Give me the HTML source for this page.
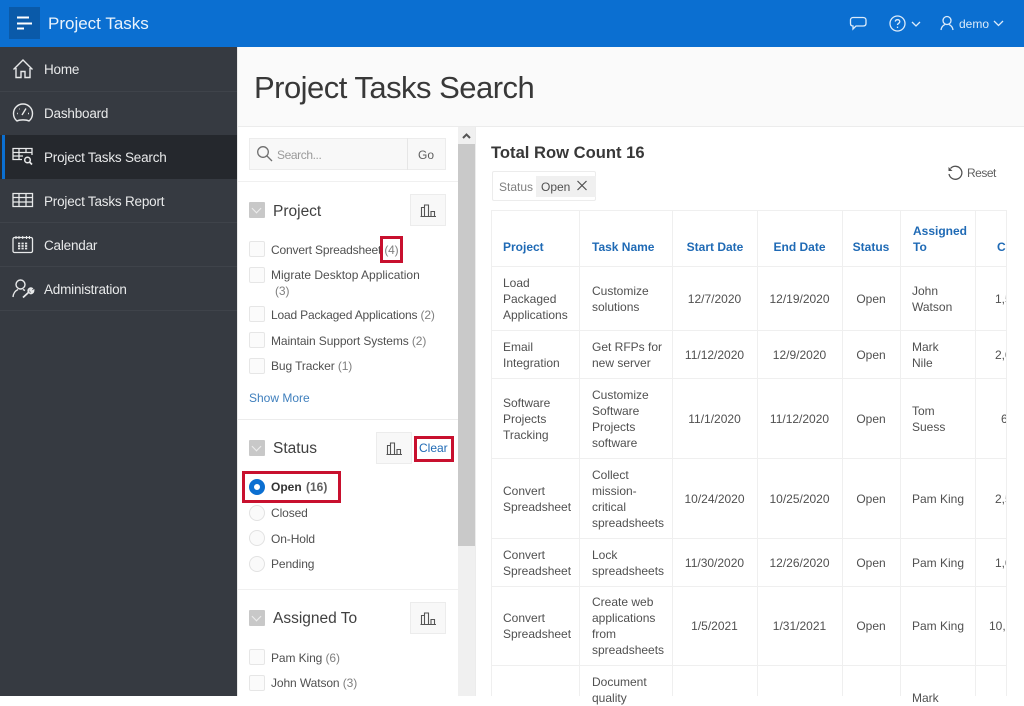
<!DOCTYPE html>
<html><head><meta charset="utf-8"><style>
*{box-sizing:border-box}
html,body{margin:0;padding:0;width:1024px;height:696px;overflow:hidden;background:#fff;font-family:"Liberation Sans",sans-serif;color:#404040}
.a{position:absolute;white-space:nowrap}
.nav{position:absolute;left:44px;font-size:13.500px;letter-spacing:-.2px;line-height:20px;color:#e8e9ea;white-space:nowrap}
.sep{position:absolute;left:0;width:237px;height:1px;background:#3f434a}
.ck{position:absolute;left:249px;width:16px;height:16px;border:1px solid #e6e6e6;border-radius:2px;background:#fbfbfb}
.rd{position:absolute;left:249px;width:16px;height:16px;border:1px solid #e2e2e2;border-radius:50%;background:#fafafa}
.o{position:absolute;left:271px;font-size:12px;letter-spacing:-.1px;line-height:16px;color:#505050;white-space:nowrap}
.o i{font-style:normal;color:#808080}
.h{position:absolute;font-size:15.500px;line-height:20px;color:#404040;left:273px;white-space:nowrap}
.fold{position:absolute;left:249px;width:16px;height:16px;background:#c8c8c8;border-radius:1px}
.fold:after{content:"";position:absolute;left:4px;top:3px;width:6px;height:6px;border-right:1.3px solid #eee;border-bottom:1.3px solid #eee;transform:rotate(45deg)}
.cb{position:absolute;width:36px;height:32px;background:#f8f8f8;border:1px solid #ececec}
.c{position:absolute;display:flex;align-items:center;font-size:12px;line-height:16px;color:#505050;padding:0 12px;white-space:nowrap}
.m{justify-content:center;text-align:center;padding:0 2px}
.t{position:absolute;display:flex;align-items:flex-end;font-size:12px;line-height:16px;font-weight:700;color:#1f6ab5;padding:0 12px 11px;white-space:nowrap}
.vl{position:absolute;top:210px;width:1px;height:486px;background:#efefef}
.hl{position:absolute;left:491px;width:515px;height:1px;background:#efefef}
.b{position:absolute;font-size:12px;line-height:16px;color:#505050;overflow:hidden;white-space:nowrap}
</style></head><body>

<div class="a" style="left:0;top:0;width:1024px;height:47px;background:#0b6fd1"></div>
<div class="a" style="left:9px;top:7px;width:31px;height:32px;background:#0a5aa9"></div>
<svg class="a" style="left:9px;top:7px" width="31" height="32" fill="none" stroke="#fff" stroke-width="2"><path d="M8 10.500H20M8 16.500H23M8 21.500H15"/></svg>
<div class="a" style="left:48px;top:13px;font-size:17px;line-height:22px;color:#eaf3fc">Project Tasks</div>
<svg class="a" style="left:848px;top:14px" width="20" height="20" fill="none" stroke="#dcebfa" stroke-width="1.300"><path d="M5 3.500H15C17 3.500 18 4.700 18 6V9.500C18 11 17 12 15 12H8L5 15V12C3 12 2.500 11 2.500 9.500V6C2.500 4.700 3.500 3.500 5 3.500Z"/></svg>
<svg class="a" style="left:888px;top:14px" width="36" height="20" fill="none" stroke="#dcebfa" stroke-width="1.300"><circle cx="9.500" cy="9.500" r="7.500"/><path d="M7.300 7.600C7.500 5 11.800 5.100 11.800 7.600C11.800 9.300 9.500 9.300 9.500 11"/><path d="M9.500 12.600V14"/><path d="M24 8L28 12L32 8"/></svg>
<svg class="a" style="left:939px;top:14px" width="16" height="20" fill="none" stroke="#dcebfa" stroke-width="1.300"><circle cx="8" cy="6.500" r="4"/><path d="M2 16C2.500 12 5 11 6 10.500M14 16C13.500 12 11 11 10 10.500"/></svg>
<div class="a" style="left:959px;top:16px;font-size:12px;line-height:16px;color:#dcebfa">demo</div>
<svg class="a" style="left:992px;top:18px" width="14" height="12" fill="none" stroke="#dcebfa" stroke-width="1.300"><path d="M2 3L6.500 7.500L11 3"/></svg>

<div class="a" style="left:0;top:47px;width:238px;height:649px;background:#363a41"></div>
<div class="a" style="left:237px;top:47px;width:1px;height:649px;background:#e8e8e8"></div>
<div class="a" style="left:0;top:135px;width:237px;height:44px;background:#25282d"></div>
<div class="a" style="left:2px;top:135px;width:3px;height:44px;background:#0b6fd1"></div>
<div class="sep" style="top:91px"></div><div class="sep" style="top:222px"></div><div class="sep" style="top:266px"></div><div class="sep" style="top:310px"></div>

<svg class="a" style="left:12px;top:58px" width="22" height="22" fill="none" stroke="#e8e9ea" stroke-width="1.400"><path d="M1.500 11.500L11 2L20.500 11.500M4 10V19.500H9V13.500H13V19.500H18V10"/></svg>
<svg class="a" style="left:12px;top:102px" width="22" height="22" fill="none" stroke="#e8e9ea" stroke-width="1.400"><path d="M5 19C2.500 17 1.500 14.500 1.500 11.500A9.500 9.500 0 0 1 20.500 11.500C20.500 14.500 19.500 17 17 19C14 17.500 8 17.500 5 19Z"/><path d="M10 13L14 6.500M5 11.500H5.800M16 11.500H17M7.500 7H8"/></svg>
<svg class="a" style="left:12px;top:146px" width="22" height="22" fill="none" stroke="#e8e9ea" stroke-width="1.300"><path d="M10 13.500H1V2.500H20V9"/><path d="M1 6.500H20M1 10H11M7 2.500V13.500M14 2.500V7"/><circle cx="15.500" cy="14" r="2.800" stroke-width="1.500"/><path d="M17.500 16L20 18.500" stroke-width="1.800"/></svg>
<svg class="a" style="left:12px;top:190px" width="22" height="22" fill="none" stroke="#e8e9ea" stroke-width="1.300"><path d="M1 3.500H20.500V16.500H1ZM1 7.500H20.500M1 12H20.500M7 3.500V16.500M14 3.500V16.500"/></svg>
<svg class="a" style="left:12px;top:234px" width="22" height="22" fill="none" stroke="#e8e9ea" stroke-width="1.300"><rect x="1" y="3.500" width="19.500" height="15" rx="1.500"/><path d="M4 2V5M7 2V5M10.700 2V5M14.500 2V5M17.500 2V5" stroke-width="1"/><path d="M6 9.500H15.500M6 12H15.500M6 14.500H15.500" stroke-width="1.700" stroke-dasharray="2.200 1.300"/></svg>
<svg class="a" style="left:12px;top:278px" width="24" height="22" fill="none" stroke="#e8e9ea" stroke-width="1.400"><circle cx="8.500" cy="6.500" r="4.500"/><path d="M1 19C1.500 14 4 12.500 6 11.500M11 11.500L13 12.500"/><path d="M11 19.500L17.500 13.500M16.500 14C15.500 11.500 18 9.500 20 10.500L18.500 12.500L19.500 13.500L21.500 12.500C21.500 15 19 16 17.500 15" stroke-width="1.800"/></svg>

<div class="nav" style="top:60px">Home</div>
<div class="nav" style="top:104px">Dashboard</div>
<div class="nav" style="top:148px">Project Tasks Search</div>
<div class="nav" style="top:192px">Project Tasks Report</div>
<div class="nav" style="top:236px">Calendar</div>
<div class="nav" style="top:280px">Administration</div>

<div class="a" style="left:238px;top:47px;width:786px;height:79px;background:#fafafa"></div>
<div class="a" style="left:238px;top:126px;width:786px;height:1px;background:#ececec"></div>
<div class="a" style="left:254px;top:67px;font-size:31px;letter-spacing:-.52px;line-height:42px;color:#383838">Project Tasks Search</div>

<div class="a" style="left:458px;top:127px;width:17px;height:569px;background:#f0f0f0"></div>
<div class="a" style="left:458px;top:144px;width:17px;height:402px;background:#c9c9c9"></div>
<svg class="a" style="left:458px;top:129px" width="17" height="14" fill="none" stroke="#555" stroke-width="2"><path d="M5 9L8.500 5.500L12 9"/></svg>
<div class="a" style="left:475px;top:127px;width:1px;height:569px;background:#ececec"></div>
<div class="a" style="left:238px;top:181px;width:220px;height:1px;background:#f0f0f0"></div>
<div class="a" style="left:238px;top:419px;width:220px;height:1px;background:#ececec"></div>
<div class="a" style="left:238px;top:589px;width:220px;height:1px;background:#f0f0f0"></div>

<div class="a" style="left:249px;top:138px;width:197px;height:32px;background:#f8f8f8;border:1px solid #ececec"></div>
<div class="a" style="left:407px;top:138px;width:1px;height:32px;background:#e6e6e6"></div>
<svg class="a" style="left:256px;top:145px" width="18" height="18" fill="none" stroke="#707070" stroke-width="1.300"><circle cx="7" cy="7" r="5.300"/><path d="M11 11L16 16"/></svg>
<div class="a" style="left:277px;top:147px;font-size:12px;letter-spacing:-.4px;line-height:16px;color:#9a9a9a">Search...</div>
<div class="a" style="left:418px;top:147px;font-size:12px;line-height:16px;color:#606060">Go</div>

<div class="fold" style="top:202px"></div>
<div class="h" style="top:202px">Project</div>
<div class="cb" style="left:410px;top:194px"></div>
<svg class="a" style="left:419px;top:202px" width="18" height="16" fill="none" stroke="#555" stroke-width="1.100"><path d="M2.500 14V5.500H5.500V14M5.500 14V3H9.500V14M12 14V9.500H15.500V14M1.500 14.500H17"/></svg>
<div class="ck" style="top:241px"></div><div class="o" style="top:242px;letter-spacing:-.17px">Convert Spreadsheet <i>(4)</i></div>
<div class="ck" style="top:267px"></div><div class="o" style="top:267px;letter-spacing:0">Migrate Desktop Application</div><div class="o" style="top:283px;left:275px"><i>(3)</i></div>
<div class="ck" style="top:306px"></div><div class="o" style="top:307px;letter-spacing:-.17px">Load Packaged Applications <i>(2)</i></div>
<div class="ck" style="top:332px"></div><div class="o" style="top:333px">Maintain Support Systems <i>(2)</i></div>
<div class="ck" style="top:358px"></div><div class="o" style="top:358px">Bug Tracker <i>(1)</i></div>
<div class="a" style="left:249px;top:390px;font-size:12px;line-height:16px;color:#3f7fbd">Show More</div>

<div class="a" style="left:380px;top:236px;width:23px;height:27px;border:3px solid #c8102e"></div>

<div class="fold" style="top:440px"></div>
<div class="h" style="top:439px">Status</div>
<div class="cb" style="left:376px;top:432px"></div>
<svg class="a" style="left:385px;top:440px" width="18" height="16" fill="none" stroke="#555" stroke-width="1.100"><path d="M2.500 14V5.500H5.500V14M5.500 14V3H9.500V14M12 14V9.500H15.500V14M1.500 14.500H17"/></svg>
<div class="a" style="left:419px;top:440px;font-size:12px;line-height:16px;color:#1f6ab5">Clear</div>
<div class="a" style="left:414px;top:436px;width:40px;height:26px;border:3px solid #c8102e"></div>

<div class="a" style="left:242px;top:471px;width:99px;height:32px;border:3px solid #c8102e"></div>
<div class="a" style="left:249px;top:479px;width:16px;height:16px;border:5px solid #0b6fd1;border-radius:50%;background:#fff"></div>
<div class="o" style="top:479px;font-weight:700;color:#333;letter-spacing:0">Open <i style="color:#606060;margin-left:1px">(16)</i></div>
<div class="rd" style="top:505px"></div><div class="o" style="top:505px">Closed</div>
<div class="rd" style="top:530px"></div><div class="o" style="top:531px">On-Hold</div>
<div class="rd" style="top:556px"></div><div class="o" style="top:556px">Pending</div>

<div class="fold" style="top:610px"></div>
<div class="h" style="top:609px">Assigned To</div>
<div class="cb" style="left:410px;top:602px"></div>
<svg class="a" style="left:419px;top:610px" width="18" height="16" fill="none" stroke="#555" stroke-width="1.100"><path d="M2.500 14V5.500H5.500V14M5.500 14V3H9.500V14M12 14V9.500H15.500V14M1.500 14.500H17"/></svg>
<div class="ck" style="top:649px"></div><div class="o" style="top:650px">Pam King <i>(6)</i></div>
<div class="ck" style="top:675px"></div><div class="o" style="top:675px">John Watson <i>(3)</i></div>

<div class="a" style="left:491px;top:142px;font-size:16.600px;line-height:22px;font-weight:700;color:#383838">Total Row Count 16</div>
<div class="a" style="left:492px;top:171px;width:104px;height:30px;border:1px solid #ececec;border-radius:2px"></div>
<div class="a" style="left:536px;top:176px;width:60px;height:21px;background:#f0f0f0"></div>
<div class="a" style="left:499px;top:179px;font-size:12px;line-height:16px;color:#808080">Status</div>
<div class="a" style="left:541px;top:179px;font-size:12px;line-height:16px;color:#505050">Open</div>
<svg class="a" style="left:575px;top:179px" width="14" height="14" fill="none" stroke="#505050" stroke-width="1.200"><path d="M2.500 2L11.500 11M11.500 2L2.500 11"/></svg>
<svg class="a" style="left:946px;top:164px" width="18" height="18" fill="none" stroke="#505050" stroke-width="1.300"><path d="M4.500 4.500A6.500 6.500 0 1 1 3 10"/><path d="M2.500 3V7H6.500Z" fill="#505050" stroke="none"/></svg>
<div class="a" style="left:967px;top:165px;font-size:12px;letter-spacing:-.5px;line-height:16px;color:#606060">Reset</div>

<div class="hl" style="top:210px"></div><div class="hl" style="top:266px"></div><div class="hl" style="top:330px"></div><div class="hl" style="top:378px"></div><div class="hl" style="top:458px"></div><div class="hl" style="top:538px"></div><div class="hl" style="top:586px"></div><div class="hl" style="top:665px"></div>
<div class="vl" style="left:491px"></div><div class="vl" style="left:579px"></div><div class="vl" style="left:672px"></div><div class="vl" style="left:757px"></div><div class="vl" style="left:842px"></div><div class="vl" style="left:900px"></div><div class="vl" style="left:975px"></div><div class="vl" style="left:1006px"></div>

<div class="t" style="left:491px;top:210px;width:88px;height:56px">Project</div>
<div class="t" style="left:580px;top:210px;width:92px;height:56px">Task Name</div>
<div class="t" style="left:673px;top:210px;width:84px;height:56px;justify-content:center;padding-left:0;padding-right:0">Start Date</div>
<div class="t" style="left:757px;top:210px;width:85px;height:56px;justify-content:center;padding-left:0;padding-right:0">End Date</div>
<div class="t" style="left:842px;top:210px;width:58px;height:56px;justify-content:center;padding-left:0;padding-right:0">Status</div>
<div class="t" style="left:901px;top:210px;width:74px;height:56px">Assigned<br>To</div>
<div class="b" style="left:997px;top:239px;width:9px;font-weight:700;color:#1f6ab5">Cost</div>

<div class="c" style="left:491px;top:267px;width:88px;height:63px">Load<br>Packaged<br>Applications</div>
<div class="c" style="left:580px;top:267px;width:92px;height:63px">Customize<br>solutions</div>
<div class="c m" style="left:672px;top:267px;width:85px;height:63px">12/7/2020</div>
<div class="c m" style="left:757px;top:267px;width:85px;height:63px">12/19/2020</div>
<div class="c m" style="left:842px;top:267px;width:58px;height:63px">Open</div>
<div class="c" style="left:900px;top:267px;width:75px;height:63px">John<br>Watson</div>
<div class="b" style="left:995px;top:291px;width:11px">1,500</div>

<div class="c" style="left:491px;top:331px;width:88px;height:47px">Email<br>Integration</div>
<div class="c" style="left:580px;top:331px;width:92px;height:47px">Get RFPs for<br>new server</div>
<div class="c m" style="left:672px;top:331px;width:85px;height:47px">11/12/2020</div>
<div class="c m" style="left:757px;top:331px;width:85px;height:47px">12/9/2020</div>
<div class="c m" style="left:842px;top:331px;width:58px;height:47px">Open</div>
<div class="c" style="left:900px;top:331px;width:75px;height:47px">Mark<br>Nile</div>
<div class="b" style="left:995px;top:347px;width:11px">2,000</div>

<div class="c" style="left:491px;top:379px;width:88px;height:79px">Software<br>Projects<br>Tracking</div>
<div class="c" style="left:580px;top:379px;width:92px;height:79px">Customize<br>Software<br>Projects<br>software</div>
<div class="c m" style="left:672px;top:379px;width:85px;height:79px">11/1/2020</div>
<div class="c m" style="left:757px;top:379px;width:85px;height:79px">11/12/2020</div>
<div class="c m" style="left:842px;top:379px;width:58px;height:79px">Open</div>
<div class="c" style="left:900px;top:379px;width:75px;height:79px">Tom<br>Suess</div>
<div class="b" style="left:1001px;top:411px;width:5px">6</div>

<div class="c" style="left:491px;top:459px;width:88px;height:79px">Convert<br>Spreadsheet</div>
<div class="c" style="left:580px;top:459px;width:92px;height:79px">Collect<br>mission-<br>critical<br>spreadsheets</div>
<div class="c m" style="left:672px;top:459px;width:85px;height:79px">10/24/2020</div>
<div class="c m" style="left:757px;top:459px;width:85px;height:79px">10/25/2020</div>
<div class="c m" style="left:842px;top:459px;width:58px;height:79px">Open</div>
<div class="c" style="left:900px;top:459px;width:75px;height:79px">Pam King</div>
<div class="b" style="left:995px;top:491px;width:11px">2,500</div>

<div class="c" style="left:491px;top:539px;width:88px;height:47px">Convert<br>Spreadsheet</div>
<div class="c" style="left:580px;top:539px;width:92px;height:47px">Lock<br>spreadsheets</div>
<div class="c m" style="left:672px;top:539px;width:85px;height:47px">11/30/2020</div>
<div class="c m" style="left:757px;top:539px;width:85px;height:47px">12/26/2020</div>
<div class="c m" style="left:842px;top:539px;width:58px;height:47px">Open</div>
<div class="c" style="left:900px;top:539px;width:75px;height:47px">Pam King</div>
<div class="b" style="left:995px;top:555px;width:11px">1,000</div>

<div class="c" style="left:491px;top:587px;width:88px;height:78px">Convert<br>Spreadsheet</div>
<div class="c" style="left:580px;top:587px;width:92px;height:78px">Create web<br>applications<br>from<br>spreadsheets</div>
<div class="c m" style="left:672px;top:587px;width:85px;height:78px">1/5/2021</div>
<div class="c m" style="left:757px;top:587px;width:85px;height:78px">1/31/2021</div>
<div class="c m" style="left:842px;top:587px;width:58px;height:78px">Open</div>
<div class="c" style="left:900px;top:587px;width:75px;height:78px">Pam King</div>
<div class="b" style="left:989px;top:618px;width:17px">10,000</div>

<div class="a" style="left:592px;top:674px;font-size:12px;line-height:16px;color:#505050">Document</div>
<div class="a" style="left:592px;top:690px;font-size:12px;line-height:16px;color:#505050">quality</div>
<div class="a" style="left:912px;top:690px;font-size:12px;line-height:16px;color:#505050">Mark</div>

</body></html>
